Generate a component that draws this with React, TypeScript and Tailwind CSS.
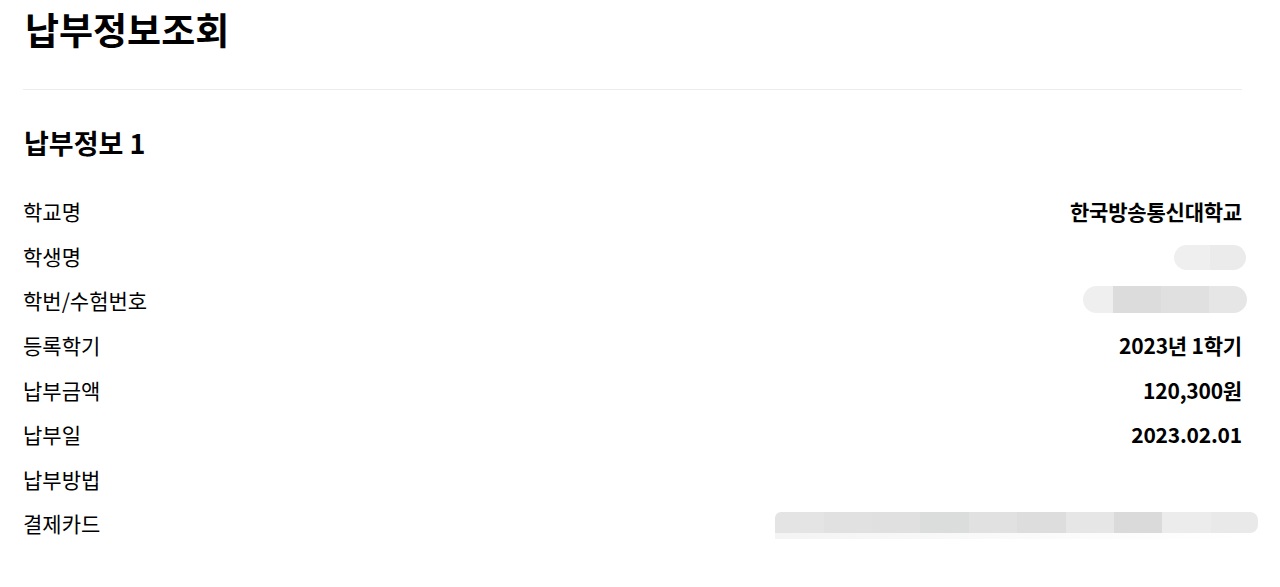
const FONT = { fontFamily: '"Noto Sans CJK KR", "Noto Sans", sans-serif' };

type Row = { label: string; value?: string; blur?: 'name' | 'id' | 'card' };

const rows: Row[] = [
  { label: '학교명', value: '한국방송통신대학교' },
  { label: '학생명', blur: 'name' },
  { label: '학번/수험번호', blur: 'id' },
  { label: '등록학기', value: '2023년 1학기' },
  { label: '납부금액', value: '120,300원' },
  { label: '납부일', value: '2023.02.01' },
  { label: '납부방법' },
  { label: '결제카드', blur: 'card' },
];

function Blur({ kind }: { kind: 'name' | 'id' | 'card' }) {
  if (kind === 'name') {
    return (
      <div className="flex h-[25px] w-[72px] -mr-[4px] translate-y-[2px] overflow-hidden rounded-full">
        <div className="w-[36px] bg-[#efefef]" />
        <div className="flex-1 bg-[#ebebeb]" />
      </div>
    );
  }
  if (kind === 'id') {
    return (
      <div className="flex h-[27px] w-[164px] -mr-[5px] translate-y-[-1px] overflow-hidden rounded-full">
        <div className="w-[30px] bg-[#efefef]" />
        <div className="w-[48px] bg-[#dcdcdc]" />
        <div className="w-[48px] bg-[#e0e0e0]" />
        <div className="flex-1 bg-[#e6e6e6]" />
      </div>
    );
  }
  return (
    <div className="-mr-[16px] translate-y-[2px] flex flex-col">
      <div className="flex h-[21px] w-[483px] overflow-hidden rounded-r-[8px] rounded-tl-[6px]">
        <div className="w-[49px] bg-[#e4e4e4]" />
        <div className="w-[48px] bg-[#e1e1e1]" />
        <div className="w-[48px] bg-[#e0e0e0]" />
        <div className="w-[49px] bg-[#dbdcdc]" />
        <div className="w-[48px] bg-[#e1e1e1]" />
        <div className="w-[49px] bg-[#dcdddc]" />
        <div className="w-[48px] bg-[#e6e6e6]" />
        <div className="w-[48px] bg-[#dadada]" />
        <div className="w-[49px] bg-[#ececec]" />
        <div className="flex-1 bg-[#e9e9e9]" />
      </div>
      <div className="h-[6px] w-[483px] bg-gradient-to-r from-[#f4f4f4] via-[#fafafa] to-white" />
    </div>
  );
}

export default function App() {
  return (
    <div className="min-h-[587px] bg-white pl-[23px] pr-[38px] text-black" style={FONT}>
      <h1 className="pt-[5px] pl-[2px] text-[37px] leading-[48px] font-bold">납부정보조회</h1>
      <div className="mt-[36px] border-t border-[#ececec]" />
      <h2 className="mt-[35px] pl-[1px] text-[27px] leading-[36px] font-bold">납부정보 1</h2>
      <div className="mt-[28px] flex flex-col">
        {rows.map((row) => (
          <div key={row.label} className="flex h-[44.6px] items-center justify-between">
            <span className="text-[21px] leading-[28px]">{row.label}</span>
            {row.value && (
              <span className="text-[21px] leading-[28px] font-semibold tracking-[-0.2px]">{row.value}</span>
            )}
            {row.blur && <Blur kind={row.blur} />}
          </div>
        ))}
      </div>
    </div>
  );
}
